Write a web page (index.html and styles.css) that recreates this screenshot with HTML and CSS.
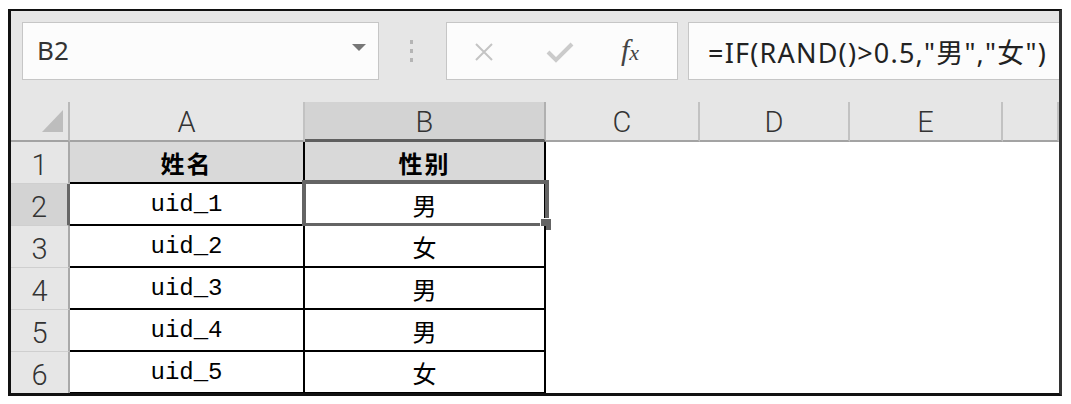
FILE: index.html
```html
<!DOCTYPE html>
<html lang="zh">
<head>
<meta charset="utf-8">
<title>Excel</title>
<link rel="stylesheet" href="styles.css">
</head>
<body>
<div class="frame">
  <div class="toolbar">
    <div class="namebox">
      <span class="name">B2</span>
      <span class="caret"></span>
    </div>
    <div class="grip"><i></i><i></i><i></i></div>
    <div class="fxbox">
      <svg class="ico-x" width="22" height="20" viewBox="0 0 22 20"><path d="M3 2 L19 18 M19 2 L3 18" stroke="#c4c4c4" stroke-width="2" fill="none"/></svg>
      <svg class="ico-check" width="28" height="22" viewBox="0 0 28 22"><path d="M2 11 L10 19 L26 3" stroke="#cbcbcb" stroke-width="4" fill="none"/></svg>
      <span class="fx">f<span class="fx-x">x</span></span>
    </div>
    <div class="formula">=IF(RAND()&gt;0.5,"男","女")</div>
  </div>
  <div class="sheet">
    <div class="ch corner"><span class="tri"></span></div>
    <div class="ch">A</div>
    <div class="ch sel">B</div>
    <div class="ch">C</div>
    <div class="ch">D</div>
    <div class="ch">E</div>
    <div class="ch"></div>

    <div class="rh">1</div>
    <div class="cell title">姓名</div>
    <div class="cell title">性别</div>
    <div class="blank"></div><div class="blank"></div><div class="blank"></div><div class="blank"></div>

    <div class="rh sel">2</div>
    <div class="cell mono">uid_1</div>
    <div class="cell cjk">男<span class="selbox"></span><span class="handle"></span></div>
    <div class="blank"></div><div class="blank"></div><div class="blank"></div><div class="blank"></div>

    <div class="rh">3</div>
    <div class="cell mono">uid_2</div>
    <div class="cell cjk">女</div>
    <div class="blank"></div><div class="blank"></div><div class="blank"></div><div class="blank"></div>

    <div class="rh">4</div>
    <div class="cell mono">uid_3</div>
    <div class="cell cjk">男</div>
    <div class="blank"></div><div class="blank"></div><div class="blank"></div><div class="blank"></div>

    <div class="rh">5</div>
    <div class="cell mono">uid_4</div>
    <div class="cell cjk">男</div>
    <div class="blank"></div><div class="blank"></div><div class="blank"></div><div class="blank"></div>

    <div class="rh">6</div>
    <div class="cell mono">uid_5</div>
    <div class="cell cjk">女</div>
    <div class="blank"></div><div class="blank"></div><div class="blank"></div><div class="blank"></div>
  </div>
</div>
</body>
</html>
```

FILE: styles.css
```css
* { box-sizing: border-box; }
html, body { margin: 0; padding: 0; background: #fff; }
body { padding: 9px 0 0 8px; }

.frame {
  width: 1054px;
  height: 387px;
  border-style: solid;
  border-color: #111;
  border-width: 2px 3px 3px 3px;
  border-right-color: #333;
  background: #e6e6e6;
  overflow: hidden;
  display: flex;
  flex-direction: column;
}

.toolbar {
  height: 91px;
  flex: none;
  display: flex;
  align-items: flex-start;
  padding-top: 11px;
  background: #e6e6e6;
}

.namebox {
  margin-left: 11px;
  width: 357px;
  height: 58px;
  border: 1px solid #c6c6c6;
  background: #fcfcfc;
  display: flex;
  align-items: center;
  justify-content: space-between;
  padding: 0 12px 0 14px;
}
.name {
  font-family: "Noto Sans", sans-serif;
  font-size: 26px;
  color: #333;
  margin-top: -3px;
}
.caret {
  width: 0; height: 0;
  border-left: 7px solid transparent;
  border-right: 7px solid transparent;
  border-top: 7px solid #777;
  margin-top: -8px;
}

.grip {
  margin-left: 31px;
  width: 3px;
  height: 58px;
  display: flex;
  flex-direction: column;
  justify-content: center;
  gap: 5px;
}
.grip i { display: block; width: 3px; height: 4px; background: #b5b5b5; }

.fxbox {
  margin-left: 33px;
  width: 232px;
  height: 58px;
  border: 1px solid #c6c6c6;
  background: #fcfcfc;
  display: flex;
  align-items: center;
  padding-left: 26px;
}
.ico-x { margin-top: 2px; }
.ico-check { margin-left: 51px; margin-top: 2px; }
.fx {
  margin-left: 47px;
  font-family: "Liberation Serif", serif;
  font-style: italic;
  font-size: 30px;
  color: #444;
  margin-top: -2px;
}
.fx-x { font-size: 22px; margin-left: 0; }

.formula {
  margin-left: 10px;
  flex: 1;
  height: 58px;
  border: 1px solid #c6c6c6;
  border-right: none;
  background: #fcfcfc;
  display: flex;
  align-items: center;
  padding-left: 19px;
  font-family: "Noto Sans", "Noto Sans CJK SC", sans-serif;
  font-size: 27px;
  letter-spacing: 1.2px;
  color: #222;
  white-space: nowrap;
}

.sheet {
  flex: 1;
  display: grid;
  grid-template-columns: 59px 235px 241px 154px 150px 153px 56px;
  grid-template-rows: 40px 42px 42px 42px 42px 42px 42px;
  background: #fff;
}

.ch {
  background: #e6e6e6;
  border-right: 2px solid #c2c2c2;
  border-bottom: 2px solid #a3a3a3;
  display: flex;
  align-items: center;
  justify-content: center;
  font-family: Roboto, "Liberation Sans", sans-serif;
  font-weight: 300;
  font-size: 29px;
  color: #333;
  padding-top: 2px;
}
.ch.corner {
  border-right-color: #b9b9b9;
  position: relative;
}
.tri {
  position: absolute;
  left: 31px;
  top: 8px;
  width: 0; height: 0;
  border-left: 21px solid transparent;
  border-bottom: 22px solid #bdbdbd;
}
.ch.sel {
  background: #d3d3d3;
  border-bottom: 3px solid #5f5f5f;
  border-right-color: #b0b0b0;
}

.rh {
  background: #e6e6e6;
  border-right: 2px solid #a9a9a9;
  border-bottom: 1px solid #cfcfcf;
  display: flex;
  align-items: center;
  justify-content: center;
  font-family: Roboto, "Liberation Sans", sans-serif;
  font-weight: 300;
  font-size: 29px;
  color: #333;
  padding-top: 4px;
}
.rh.sel {
  background: #d3d3d3;
  border-right: 3px solid #666;
}

.cell {
  position: relative;
  background: #fff;
  border-right: 2px solid #000;
  border-bottom: 2px solid #000;
  display: flex;
  align-items: center;
  justify-content: center;
  color: #000;
}
.cell.title {
  background: #d9d9d9;
  font-family: "Noto Sans CJK SC", sans-serif;
  font-weight: 700;
  font-size: 24px;
  letter-spacing: 2px;
}
.cell.mono {
  font-family: "Liberation Mono", monospace;
  font-size: 24px;
}
.cell.cjk {
  font-family: "Noto Sans CJK SC", sans-serif;
  font-size: 24px;
}

.blank { background: #fff; }

.selbox {
  position: absolute;
  left: -3px;
  top: -4px;
  width: 247px;
  height: 47px;
  border: 4px solid #646464;
}
.handle {
  position: absolute;
  left: 235px;
  top: 34px;
  width: 12px;
  height: 13px;
  background: #646464;
  border: 1px solid #fff;
}
```
